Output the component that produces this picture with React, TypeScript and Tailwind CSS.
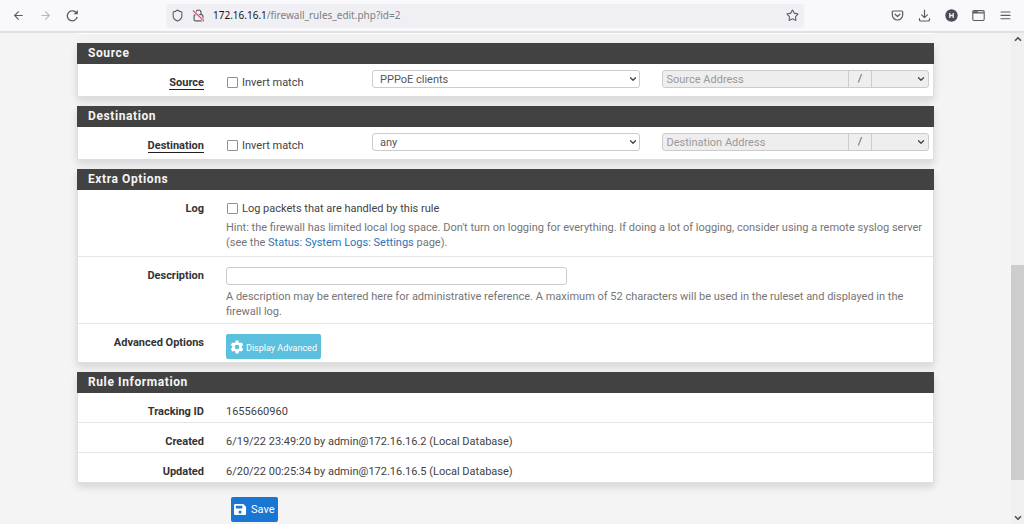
import type { ReactNode } from 'react';
import { ArrowLeft, ArrowRight, Shield, Star, ChevronDown, ChevronUp } from 'lucide-react';

const cidrBits = Array.from({ length: 32 }, (_, i) => 32 - i);

function Panel({ title, children }: { title: string; children: ReactNode }) {
  return (
    <section className="mb-[9px] border-x border-b border-[#dedede] bg-white shadow-[0_4px_8px_rgba(0,0,0,0.13)]">
      <h2 className="-mx-px bg-[#424242] pl-[11px] text-xs leading-[21px] font-bold tracking-wider text-[#f5f5f5]">{title}</h2>
      <div className="divide-y divide-[#e5e5e5]">{children}</div>
    </section>
  );
}

function Row({ label, htmlFor, underline, children }: { label: string; htmlFor?: string; underline?: boolean; children: ReactNode }) {
  const text = <span className={underline ? 'border-b border-[#212121]' : ''}>{label}</span>;
  return (
    <div className="flex gap-[22px] pr-1">
      <div className="w-[126px] shrink-0 pt-[11px] text-right font-bold text-[#333]">
        {htmlFor ? <label htmlFor={htmlFor}>{text}</label> : text}
      </div>
      <div className="min-w-0 flex-1">{children}</div>
    </div>
  );
}

function Check({ id, children }: { id: string; children: ReactNode }) {
  return (
    <label htmlFor={id} className="flex items-center gap-1 pt-[11px] pl-px">
      <input id={id} type="checkbox" className="size-[11px] appearance-none rounded-[1px] border border-[#8f8f9d] bg-white checked:bg-[#1976d2]" />
      {children}
    </label>
  );
}

function SelectArrow() {
  return <ChevronDown size={10} strokeWidth={3} className="pointer-events-none absolute top-1/2 right-[2px] -translate-y-1/2 text-[#444]" />;
}

function AddressRow({ name, options }: { name: string; options: string[] }) {
  const id = name.toLowerCase();
  return (
    <Row label={name} htmlFor={id + '-type'} underline>
      <div className="grid grid-cols-[124px_1fr_1fr] gap-[22px] pb-[6px]">
        <Check id={id + '-invert'}>Invert match</Check>
        <div className="relative mt-[6px] h-[18px]">
          <select id={id + '-type'} className="block h-full w-full appearance-none rounded-[3px] border border-[#ccc] bg-white pl-[7px] text-[#555]">
            {options.map((o) => <option key={o}>{o}</option>)}
          </select>
          <SelectArrow />
        </div>
        <div className="mt-[6px] flex h-[18px] rounded-[3px] border border-[#ccc] bg-[#eee] text-[#555]">
          <input aria-label={name + ' Address'} placeholder={name + ' Address'} disabled className="min-w-0 flex-1 pl-1 placeholder:text-[#999]" />
          <span className="w-6 border-x border-[#ccc] text-center leading-4">/</span>
          <div className="relative w-14">
            <select aria-label={name + ' mask'} disabled defaultValue="" className="block h-full w-full appearance-none">
              <option value=""></option>
              {cidrBits.map((n) => <option key={n}>{n}</option>)}
            </select>
            <SelectArrow />
          </div>
        </div>
      </div>
    </Row>
  );
}

function BrowserBar() {
  return (
    <header className="flex h-[33px] shrink-0 items-center border-b-2 border-[#e1e1e3] bg-[#f9f9fb] px-3 text-[#5b5b66]">
      <div className="flex w-[154px] items-center gap-[14px]">
        <button aria-label="Back"><ArrowLeft size={13} strokeWidth={2} /></button>
        <button aria-label="Forward"><ArrowRight size={13} strokeWidth={2} className="text-[#b8b8be]" /></button>
        <button aria-label="Reload">
          <svg width="13" height="13" viewBox="0 0 13 13" fill="none" stroke="currentColor" strokeWidth="1.3">
            <path d="M11.2 8A5 5 0 1 1 9.7 3.1L11 4.4" />
            <path d="M11.8 1v4.2H7.6z" fill="currentColor" stroke="none" />
          </svg>
        </button>
      </div>
      <div className="flex h-6 min-w-0 flex-1 items-center rounded-[3px] bg-[#f0f0f4] px-[5px]">
        <Shield size={13} strokeWidth={2} />
        <svg className="mx-2 shrink-0" width="13" height="13" viewBox="0 0 13 13" fill="none" stroke="currentColor" strokeWidth="1.2">
          <rect x="2.1" y="5.6" width="8.8" height="6.3" rx="1.2" />
          <path d="M4 5.6V3.5a2.5 2.5 0 0 1 5 0v2.1" />
          <path d="M1 1.5l11 10.5" stroke="#f0f0f4" strokeWidth="2.6" />
          <path d="M1 1.5l11 10.5" stroke="#f0506e" />
        </svg>
        <div className="flex min-w-0 flex-1 font-['Noto_Sans',sans-serif] text-[10px]">
          <span className="text-[#15141a]">172.16.16.1</span>
          <input aria-label="Address" defaultValue="/firewall_rules_edit.php?id=2" className="min-w-0 flex-1 text-[#7d7d85]" />
        </div>
        <button aria-label="Bookmark"><Star size={13} strokeWidth={2} /></button>
      </div>
      <div className="flex items-center gap-[14px] pl-[87px]">
        <button aria-label="Pocket">
          <svg width="13" height="13" viewBox="0 0 13 13" fill="none" stroke="currentColor" strokeWidth="1.2" strokeLinecap="round" strokeLinejoin="round">
            <path d="M2.3 2h8.4c.6 0 1 .4 1 1v2.8a5.2 5.2 0 0 1-10.4 0V3c0-.6.4-1 1-1z" />
            <path d="M4 5.2l2.5 2.3L9 5.2" />
          </svg>
        </button>
        <button aria-label="Downloads">
          <svg width="13" height="13" viewBox="0 0 13 13" fill="none" stroke="currentColor" strokeWidth="1.2" strokeLinecap="round" strokeLinejoin="round">
            <path d="M6.5 1v7.6M3.6 5.8l2.9 2.9 2.9-2.9M1.5 9.5v1.2c0 .7.5 1.3 1.3 1.3h7.4c.8 0 1.3-.6 1.3-1.3V9.5" />
          </svg>
        </button>
        <button aria-label="Extension">
          <svg width="13" height="13" viewBox="0 0 13 13">
            <circle cx="6.5" cy="6.5" r="6.2" fill="#4c4c58" />
            <path d="M4.8 4v5M8.2 4v5M4.8 6.5h3.4" stroke="#f0f0f4" strokeWidth="1.3" />
          </svg>
        </button>
        <button aria-label="Sidebar">
          <svg width="13" height="13" viewBox="0 0 13 13" fill="none" stroke="currentColor" strokeWidth="1.1">
            <rect x="0.8" y="1.6" width="11.4" height="9.9" rx="1.2" />
            <path d="M1 3.9h11M1 2.7h5" />
          </svg>
        </button>
        <button aria-label="Menu">
          <svg width="13" height="13" viewBox="0 0 13 13" stroke="currentColor" strokeWidth="1.1" strokeLinecap="round">
            <path d="M2 3h9M2 6.4h9M2 9.8h9" />
          </svg>
        </button>
      </div>
    </header>
  );
}

export default function App() {
  return (
    <div className="flex h-screen flex-col overflow-hidden bg-[#f4f4f4] font-[Roboto,sans-serif] text-[11px] leading-[15px] text-[#424242]">
      <BrowserBar />
      <div className="flex min-h-0 flex-1">
        <main className="min-w-0 flex-1 overflow-hidden">
          <form className="mx-auto max-w-[857px]" onSubmit={(e) => e.preventDefault()}>
            <div className="mb-[9px] h-px bg-white shadow-[0_4px_8px_rgba(0,0,0,0.13)]" />
            <Panel title="Source">
              <AddressRow name="Source" options={['PPPoE clients', 'any', 'Network']} />
            </Panel>
            <Panel title="Destination">
              <AddressRow name="Destination" options={['any', 'PPPoE clients', 'Network']} />
            </Panel>
            <Panel title="Extra Options">
              <Row label="Log" htmlFor="log">
                <Check id="log">Log packets that are handled by this rule</Check>
                <p className="pt-1 pb-[6px] text-[#757575]">
                  Hint: the firewall has limited local log space. Don't turn on logging for everything. If doing a lot of logging, consider using a remote syslog server (see the <a href="#" className="text-[#2a75b8]">Status: System Logs: Settings</a> page).
                </p>
              </Row>
              <Row label="Description" htmlFor="descr">
                <input id="descr" type="text" maxLength={52} className="mt-[10px] block h-[18px] w-[341px] max-w-full rounded-[3px] border border-[#ccc] bg-white px-[7px]" />
                <p className="pt-1 pb-1 text-[#757575]">
                  A description may be entered here for administrative reference. A maximum of 52 characters will be used in the ruleset and displayed in the firewall log.
                </p>
              </Row>
              <Row label="Advanced Options">
                <button type="button" className="mt-[10px] mb-[3px] flex h-[25px] items-center gap-[2px] rounded-xs bg-[#5bc0de] px-1 text-[9px] text-white">
                  <svg width="14" height="14" viewBox="0 0 24 24" fill="currentColor">
                    <path fillRule="evenodd" d="M9.6 1h4.8l.7 3.2 2 1.1 3.1-1 2.4 4.2-2.4 2.2v2.6l2.4 2.2-2.4 4.2-3.1-1-2 1.1-.7 3.2H9.6l-.7-3.2-2-1.1-3.1 1-2.4-4.2 2.4-2.2v-2.6L1.4 8.5l2.4-4.2 3.1 1 2-1.1zM12 8a4 4 0 1 0 0 8 4 4 0 0 0 0-8z" />
                  </svg>
                  <span className="pt-[3px]">Display Advanced</span>
                </button>
              </Row>
            </Panel>
            <Panel title="Rule Information">
              <Row label="Tracking ID"><p className="pt-[11px] pb-[3px]">1655660960</p></Row>
              <Row label="Created"><p className="pt-[11px] pb-[3px]">6/19/22 23:49:20 by admin@172.16.16.2 (Local Database)</p></Row>
              <Row label="Updated"><p className="pt-[11px] pb-[3px]">6/20/22 00:25:34 by admin@172.16.16.5 (Local Database)</p></Row>
            </Panel>
            <button type="submit" className="mt-[14px] ml-[154px] flex h-[25px] items-center gap-1 rounded-xs bg-[#1976d2] px-[3px] text-white">
              <svg width="13" height="13" viewBox="0 0 14 14" fill="currentColor">
                <path fillRule="evenodd" d="M1.5 1H10l3 3v7.5c0 .8-.7 1.5-1.5 1.5h-10C.7 13 0 12.3 0 11.5v-9C0 1.700.7 1 1.500 1zM2 3v3h7V3zm4.500 5a1.700 1.700 0 1 0 0 3.400 1.700 1.700 0 0 0 0-3.400z" />
              </svg>
              Save
            </button>
          </form>
        </main>
        <div className="flex w-[13px] shrink-0 flex-col items-center bg-[#f0f0f0] text-[#505050]" aria-hidden="true">
          <ChevronUp size={10} strokeWidth={4} className="my-px shrink-0" />
          <div className="grow-[220]" />
          <div className="w-full grow-[215] bg-[#cdcdcd]" />
          <div className="grow-[32]" />
          <ChevronDown size={10} strokeWidth={4} className="my-px shrink-0" />
        </div>
      </div>
    </div>
  );
}
